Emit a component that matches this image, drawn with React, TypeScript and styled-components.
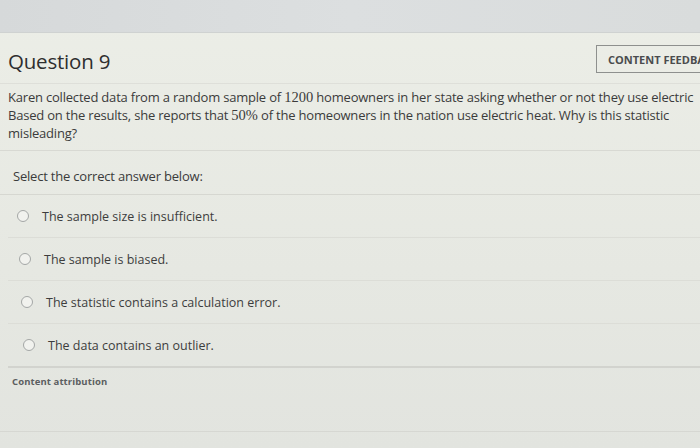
import React from 'react';
import styled, { createGlobalStyle } from 'styled-components';

const GlobalStyle = createGlobalStyle`
  html, body {
    margin: 0;
    padding: 0;
    background: #e8e9e4;
  }
  body {
    font-family: 'Open Sans', 'Noto Sans', sans-serif;
    color: #3b3b3b;
  }
`;

const Page = styled.div`
  width: 700px;
  height: 448px;
  overflow: hidden;
  display: flex;
  flex-direction: column;
  background: linear-gradient(180deg, #eceee7 0%, #e6e8e2 60%, #e2e4df 100%);
`;

const TopBar = styled.div`
  height: 32px;
  flex-shrink: 0;
  background: linear-gradient(90deg, #d6d9da 0%, #dcdfe0 50%, #d9dcdc 100%);
  border-bottom: 1px solid #cfd2d1;
`;

const Header = styled.div`
  display: flex;
  align-items: center;
  justify-content: space-between;
  height: 44px;
  padding: 6px 0 0 8px;
  border-bottom: 1px solid #dedfd9;
`;

const Title = styled.h1`
  margin: 0;
  font-size: 20.5px;
  font-weight: 400;
  color: #2e2e2e;
  letter-spacing: -0.2px;
`;

const FeedbackButton = styled.button`
  width: 106px;
  height: 28px;
  margin-right: -2px;
  margin-top: -4px;
  background: transparent;
  border: 1px solid #8e908e;
  border-right: none;
  font-family: 'Open Sans', sans-serif;
  font-size: 11px;
  font-weight: 700;
  color: #4a4c4e;
  text-align: left;
  padding: 0 0 0 11px;
  white-space: nowrap;
  overflow: hidden;
`;

const Prompt = styled.div`
  padding: 4px 8px 8px;
  font-size: 13px;
  line-height: 18px;
  letter-spacing: -0.2px;
  white-space: nowrap;
  border-bottom: 1px solid #d8d9d3;
`;

const Num = styled.span`
  font-family: 'Liberation Serif', serif;
  font-size: 14.5px;
  letter-spacing: 0;
`;

const Instruction = styled.div`
  height: 44px;
  display: flex;
  align-items: center;
  padding: 6px 13px 0;
  box-sizing: border-box;
  font-size: 13px;
  letter-spacing: -0.2px;
  border-bottom: 1px solid #d6d7d1;
`;

const Options = styled.div`
  margin-left: 8px;
  border-bottom: 2px solid #d2d3ce;
`;

const Option = styled.label<{ $shift: number }>`
  display: flex;
  align-items: center;
  gap: 13px;
  height: 42px;
  padding-left: ${p => 9 + p.$shift}px;
  font-size: 12.5px;
  color: #3d3d3d;
  border-bottom: 1px solid #dcddd7;

  &:last-child {
    border-bottom: none;
  }
`;

const Radio = styled.span`
  width: 10px;
  height: 10px;
  border-radius: 50%;
  border: 1.5px solid #a4a7a6;
  background: #f1f2ee;
  flex-shrink: 0;
`;

const Attribution = styled.div`
  padding: 7px 12px;
  font-size: 9.5px;
  font-weight: 700;
  color: #5b5e60;
  letter-spacing: 0.1px;
`;

const Footer = styled.div`
  margin-top: auto;
  height: 16px;
  border-top: 1px solid #d6d7d2;
`;

const options = [
  'The sample size is insufficient.',
  'The sample is biased.',
  'The statistic contains a calculation error.',
  'The data contains an outlier.',
];

export default function App() {
  return (
    <>
      <GlobalStyle />
      <Page>
        <TopBar />
        <Header>
          <Title>Question 9</Title>
          <FeedbackButton>CONTENT FEEDBACK</FeedbackButton>
        </Header>
        <Prompt>
          Karen collected data from a random sample of <Num>1200</Num> homeowners in her state asking whether or not they use electric
          <br />
          Based on the results, she reports that <Num>50%</Num> of the homeowners in the nation use electric heat. Why is this statistic
          <br />
          misleading?
        </Prompt>
        <Instruction>Select the correct answer below:</Instruction>
        <Options>
          {options.map((text, i) => (
            <Option key={text} $shift={i * 2}>
              <Radio />
              {text}
            </Option>
          ))}
        </Options>
        <Attribution>Content attribution</Attribution>
        <Footer />
      </Page>
    </>
  );
}
